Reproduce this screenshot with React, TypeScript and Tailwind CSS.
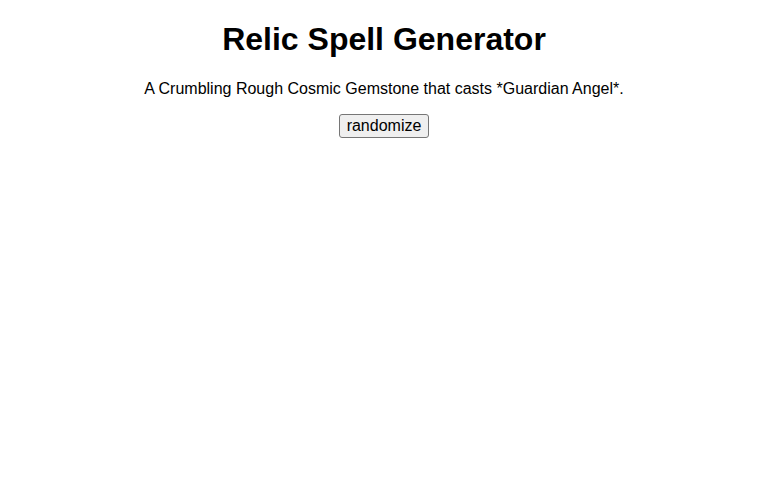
import { useState } from "react";

const QUALITIES = ["Crumbling", "Gleaming", "Ancient", "Cursed"];
const TEXTURES = ["Rough", "Polished", "Jagged", "Smooth"];
const ORIGINS = ["Cosmic", "Infernal", "Sylvan", "Abyssal"];
const RELICS = ["Gemstone", "Amulet", "Chalice", "Tome"];
const SPELLS = ["Guardian Angel", "Fireball", "Mirror Image", "Stone Skin"];

const pick = (list: string[]) => list[Math.floor(Math.random() * list.length)];

export default function App() {
  const [spell, setSpell] = useState({
    quality: "Crumbling",
    texture: "Rough",
    origin: "Cosmic",
    relic: "Gemstone",
    spell: "Guardian Angel",
  });

  const randomize = () =>
    setSpell({
      quality: pick(QUALITIES),
      texture: pick(TEXTURES),
      origin: pick(ORIGINS),
      relic: pick(RELICS),
      spell: pick(SPELLS),
    });

  return (
    <div className="min-h-screen bg-white text-center text-black font-['Liberation_Sans',Arial,sans-serif] text-base">
      <div className="pt-[21.44px]">
        <h1 className="text-[32px] font-bold leading-[37px]">Relic Spell Generator</h1>
        <p className="mt-[21.44px] leading-[18px]">
          A {spell.quality} {spell.texture} {spell.origin} {spell.relic} that casts *{spell.spell}*.
        </p>
        <button
          onClick={randomize}
          className="mt-[16px] rounded-[3px] border border-[#767676] bg-[#efefef] px-[7px] py-[2px] text-base leading-[18px] hover:bg-[#e5e5e5]"
        >
          randomize
        </button>
      </div>
    </div>
  );
}
